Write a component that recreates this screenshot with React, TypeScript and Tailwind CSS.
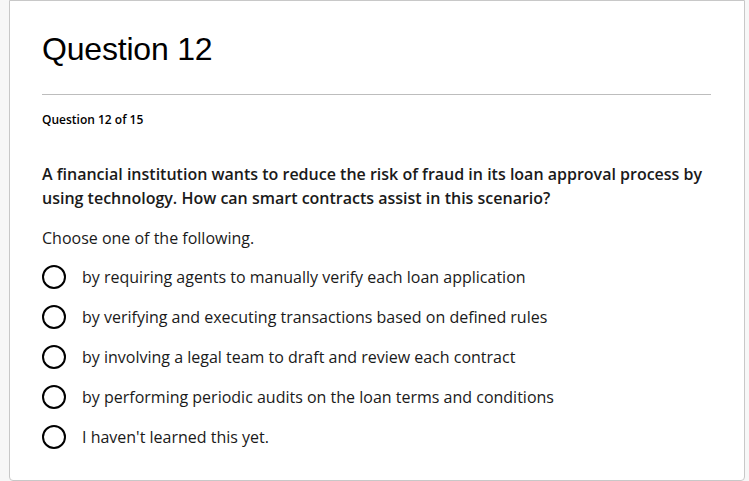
import React from "react";

const options = [
  "by requiring agents to manually verify each loan application",
  "by verifying and executing transactions based on defined rules",
  "by involving a legal team to draft and review each contract",
  "by performing periodic audits on the loan terms and conditions",
  "I haven't learned this yet.",
];

export default function App() {
  return (
    <div className="w-[749px] h-[481px] bg-[#f7f7f7] overflow-hidden">
      <div className="ml-[9px] w-[736px] h-[481px] bg-white border border-[#c8c8c8] rounded-b-[4px] pl-[32px] pr-[33px] pt-[29px]">
        <h1
          className="text-[32px] leading-[38px] text-black tracking-[-0.2px]"
          style={{ fontFamily: '"Liberation Sans", Arial, sans-serif' }}
        >
          Question 12
        </h1>
        <div className="mt-[26px] h-px bg-[#bdbdbd]" />
        <div style={{ fontFamily: '"Open Sans", sans-serif' }}>
          <p className="mt-[16px] text-[12px] leading-[17px] font-semibold text-black">
            Question 12 of 15
          </p>
          <p className="mt-[34px] text-[16px] leading-[24px] font-semibold text-[#1a1a1a]">
            A financial institution wants to reduce the risk of fraud in its loan approval process by using technology. How can smart contracts assist in this scenario?
          </p>
          <p className="mt-[17px] text-[16px] leading-[22px] text-[#1a1a1a]">
            Choose one of the following.
          </p>
          <div className="mt-[17px] flex flex-col gap-[18px]">
            {options.map((o) => (
              <label key={o} className="flex items-center h-[22px]">
                <span className="w-[24px] h-[24px] rounded-full border-[2.5px] border-black shrink-0" />
                <span className="ml-[16px] text-[16px] leading-[22px] text-[#1a1a1a]">{o}</span>
              </label>
            ))}
          </div>
        </div>
      </div>
    </div>
  );
}
